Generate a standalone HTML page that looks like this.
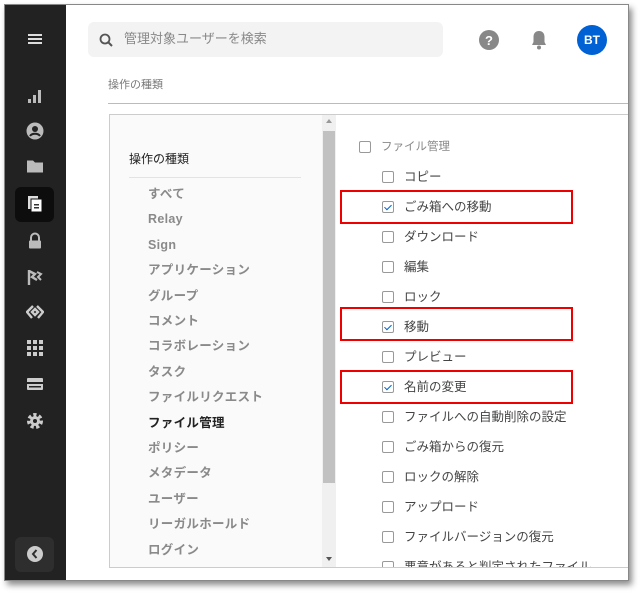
<!DOCTYPE html>
<html><head><meta charset="utf-8"><style>
*{margin:0;padding:0;box-sizing:border-box}
body{width:643px;height:595px;background:#fff;position:relative;overflow:hidden;font-family:"Liberation Sans","Noto Sans CJK JP",sans-serif}
.frame{position:absolute;left:4px;top:4px;width:625px;height:577px;border:1px solid #888;box-shadow:3px 4px 6px rgba(0,0,0,.45);background:#fff;overflow:hidden}
.side{position:absolute;left:0;top:0;width:61px;height:100%;background:#222}
.ic{position:absolute;left:30px;transform:translate(-50%,-50%);}
.abs{position:absolute}
.li{position:absolute;left:143px;font-size:12.5px;line-height:16px;height:16px;color:#8a8a8a;font-weight:bold;letter-spacing:.3px}
.ri{position:absolute;font-size:12.5px;line-height:16px;height:16px;color:#444;}
.cb{position:absolute;width:12px;height:12px;border:1.3px solid #999;border-radius:2px;background:#fff}
.cb.on::after{content:"";position:absolute;left:3px;top:1px;width:3px;height:6px;border:solid #0061d5;border-width:0 1.6px 1.6px 0;transform:rotate(45deg)}
.red{position:absolute;left:336px;width:233px;height:34px;border:2.5px solid #e00}
</style></head><body>
<div class="frame">
<div class="side">
 <svg class="ic" style="top:34px" width="14" height="12"><rect y="1" width="14" height="2" fill="#ddd"/><rect y="5" width="14" height="2" fill="#ddd"/><rect y="9" width="14" height="2" fill="#ddd"/></svg>
 <svg class="ic" style="top:91px" width="16" height="16"><rect x="1" y="11" width="3" height="4" fill="#bbb"/><rect x="6" y="7" width="3" height="8" fill="#bbb"/><rect x="11" y="2" width="3" height="13" fill="#bbb"/></svg>
 <svg class="ic" style="top:126px" width="18" height="18"><circle cx="9" cy="9" r="8.5" fill="#bbb"/><circle cx="9" cy="7" r="3" fill="#222"/><path d="M4 14c2-3 8-3 10 0" stroke="#222" stroke-width="2" fill="none"/></svg>
 <svg class="ic" style="top:161px" width="18" height="15"><path d="M1 2h6l2 2h8v10H1z" fill="#bbb"/></svg>
 <div class="abs" style="left:10px;top:182px;width:39px;height:35px;background:#0d0d0d;border-radius:6px"></div>
 <svg class="ic" style="top:199px" width="16" height="18"><rect x="1" y="1" width="10" height="13" fill="#ddd"/><rect x="4" y="4" width="11" height="13" fill="#fff" stroke="#0d0d0d"/><rect x="7" y="9" width="5" height="1.5" fill="#333"/><rect x="7" y="12" width="5" height="1.5" fill="#333"/></svg>
 <svg class="ic" style="top:236px" width="14" height="17"><path d="M3 8V5a4 4 0 0 1 8 0v3" stroke="#bbb" stroke-width="2" fill="none"/><rect x="1" y="8" width="12" height="8" rx="1" fill="#bbb"/></svg>
 <svg class="ic" style="top:272px" width="16" height="16"><path d="M2 1v15M2 2l6 3-3 3 5 3" stroke="#bbb" stroke-width="2.4" fill="none"/><path d="M10 3l4 2-3 3 3 3" stroke="#bbb" stroke-width="2" fill="none"/></svg>
 <svg class="ic" style="top:307px" width="18" height="14"><path d="M7 1L1 7l5 6M11 1l6 6-5 6M6 7l3-3 3 3-3 3z" stroke="#ccc" stroke-width="2.4" fill="none"/></svg>
 <svg class="ic" style="top:343px" width="16" height="16"><g fill="#ccc"><rect x="0" y="0" width="4" height="4"/><rect x="6" y="0" width="4" height="4"/><rect x="12" y="0" width="4" height="4"/><rect x="0" y="6" width="4" height="4"/><rect x="6" y="6" width="4" height="4"/><rect x="12" y="6" width="4" height="4"/><rect x="0" y="12" width="4" height="4"/><rect x="6" y="12" width="4" height="4"/><rect x="12" y="12" width="4" height="4"/></g></svg>
 <svg class="ic" style="top:379px" width="18" height="14"><rect x="1" y="1" width="16" height="12" rx="1" fill="#ccc"/><rect x="1" y="5" width="16" height="2" fill="#222"/><rect x="3" y="9" width="12" height="1.5" fill="#222"/></svg>
 <svg class="ic" style="top:416px" width="18" height="18"><circle cx="9" cy="9" r="6" fill="none" stroke="#ccc" stroke-width="4" stroke-dasharray="3 2.3"/><circle cx="9" cy="9" r="5" fill="#ccc"/><circle cx="9" cy="9" r="2" fill="#222"/></svg>
 <div class="abs" style="left:10px;top:532px;width:39px;height:35px;background:#2e2e2e;border-radius:6px"></div>
 <svg class="ic" style="top:549px" width="16" height="16"><circle cx="8" cy="8" r="8" fill="#ccc"/><path d="M9.5 4L6 8l3.5 4" stroke="#2e2e2e" stroke-width="2" fill="none"/></svg>
</div>
<div class="abs" style="left:83px;top:17px;width:355px;height:35px;background:#f3f3f3;border-radius:6px"></div>
<svg class="abs" style="left:94px;top:28px" width="14" height="14"><circle cx="6" cy="6" r="4.5" stroke="#555" stroke-width="1.8" fill="none"/><path d="M9.5 9.5l3.5 3.5" stroke="#555" stroke-width="2"/></svg>
<div class="abs" style="left:119px;top:26px;font-size:13px;line-height:16px;color:#888">管理対象ユーザーを検索</div>
<svg class="abs" style="left:474px;top:25px" width="20" height="20"><circle cx="10" cy="10" r="10" fill="#888"/><text x="10" y="15" text-anchor="middle" font-size="13" font-weight="bold" fill="#fff" font-family="Liberation Sans">?</text></svg>
<svg class="abs" style="left:525px;top:24px" width="18" height="22"><path d="M9 2c-4 0-5.5 3-5.5 6v5L2 16h14l-1.5-3V8C14.5 5 13 2 9 2z" fill="#888"/><circle cx="9" cy="18.5" r="2" fill="#888"/></svg>
<div class="abs" style="left:572px;top:20px;width:30px;height:30px;border-radius:50%;background:#0061d5;color:#fff;font-size:12px;font-weight:bold;text-align:center;line-height:30px">BT</div>
<div class="abs" style="left:103px;top:73px;font-size:11px;line-height:14px;color:#777">操作の種類</div>
<div class="abs" style="left:103px;top:98px;width:530px;height:1px;background:#bbb"></div>
<div class="abs" style="left:104px;top:109px;width:540px;height:454px;border:1px solid #ccc;background:#fff"></div>
<div class="abs" style="left:105px;top:110px;width:213px;height:452px;background:#fafafa"></div>
<div class="abs" style="left:317px;top:110px;width:14px;height:452px;background:#f0f0f0"></div>
<div class="abs" style="left:318px;top:126px;width:12px;height:352px;background:#c1c1c1"></div>
<div class="abs" style="left:321px;top:114px;width:0;height:0;border:3px solid transparent;border-bottom:4px solid #999;border-top:0"></div>
<div class="abs" style="left:321px;top:552px;width:0;height:0;border:3px solid transparent;border-top:4px solid #555;border-bottom:0"></div>
<div class="abs" style="left:124px;top:146px;font-size:12px;line-height:16px;color:#222">操作の種類</div>
<div class="abs" style="left:124px;top:172px;width:172px;height:1px;background:#e3e3e3"></div>
<div class="li" style="top:181px">すべて</div>
<div class="li" style="top:206px">Relay</div>
<div class="li" style="top:232px">Sign</div>
<div class="li" style="top:257px">アプリケーション</div>
<div class="li" style="top:283px">グループ</div>
<div class="li" style="top:308px">コメント</div>
<div class="li" style="top:333px">コラボレーション</div>
<div class="li" style="top:359px">タスク</div>
<div class="li" style="top:384px">ファイルリクエスト</div>
<div class="li" style="top:410px;color:#222">ファイル管理</div>
<div class="li" style="top:435px">ポリシー</div>
<div class="li" style="top:460px">メタデータ</div>
<div class="li" style="top:486px">ユーザー</div>
<div class="li" style="top:511px">リーガルホールド</div>
<div class="li" style="top:537px">ログイン</div>

<div class="cb" style="left:354px;top:136px"></div><div class="ri" style="left:376px;top:134px;color:#888;font-size:11.5px">ファイル管理</div>
<div class="cb" style="left:377px;top:166px"></div><div class="ri" style="left:399px;top:164px">コピー</div>
<div class="cb on" style="left:377px;top:196px"></div><div class="ri" style="left:399px;top:194px">ごみ箱への移動</div>
<div class="cb" style="left:377px;top:226px"></div><div class="ri" style="left:399px;top:224px">ダウンロード</div>
<div class="cb" style="left:377px;top:256px"></div><div class="ri" style="left:399px;top:254px">編集</div>
<div class="cb" style="left:377px;top:286px"></div><div class="ri" style="left:399px;top:284px">ロック</div>
<div class="cb on" style="left:377px;top:316px"></div><div class="ri" style="left:399px;top:314px">移動</div>
<div class="cb" style="left:377px;top:346px"></div><div class="ri" style="left:399px;top:344px">プレビュー</div>
<div class="cb on" style="left:377px;top:376px"></div><div class="ri" style="left:399px;top:374px">名前の変更</div>
<div class="cb" style="left:377px;top:406px"></div><div class="ri" style="left:399px;top:404px">ファイルへの自動削除の設定</div>
<div class="cb" style="left:377px;top:436px"></div><div class="ri" style="left:399px;top:434px">ごみ箱からの復元</div>
<div class="cb" style="left:377px;top:466px"></div><div class="ri" style="left:399px;top:464px">ロックの解除</div>
<div class="cb" style="left:377px;top:496px"></div><div class="ri" style="left:399px;top:494px">アップロード</div>
<div class="cb" style="left:377px;top:526px"></div><div class="ri" style="left:399px;top:524px">ファイルバージョンの復元</div>
<div class="abs" style="left:331px;top:550px;width:300px;height:12px;overflow:hidden"><div class="cb" style="left:46px;top:6px"></div><div class="ri" style="left:68px;top:4px">悪意があると判定されたファイル</div></div>
<div class="red" style="left:335px;top:185px"></div>
<div class="red" style="left:335px;top:302px"></div>
<div class="red" style="left:335px;top:365px"></div>
</div>
</body></html>
